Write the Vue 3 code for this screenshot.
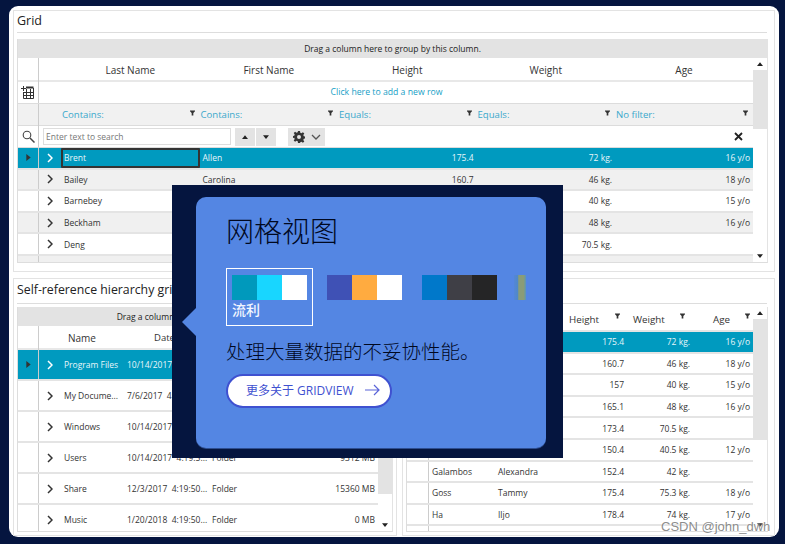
<template>
  <div class="page">
    <svg class="sprite" aria-hidden="true">
      <symbol id="chev" viewBox="0 0 6 10"><path d="M1 1l4 4-4 4" fill="none" stroke="currentColor" stroke-width="1.5" /></symbol>
      <symbol id="funnel" viewBox="0 0 6 6"><path d="M0 0h6v1L4 3v3H2V3L0 1z" fill="currentColor" /></symbol>
      <symbol id="tri-up" viewBox="0 0 8 5"><path d="M4 0l4 5H0z" fill="currentColor" /></symbol>
      <symbol id="tri-down" viewBox="0 0 8 5"><path d="M0 0h8L4 5z" fill="currentColor" /></symbol>
    </svg>

    <div class="window">
      <!-- Grid -->
      <section class="panel panel-top">
        <h2 class="panel-title">Grid</h2>
        <div class="grid">
          <div class="group-bar">Drag a column here to group by this column.</div>
          <div class="grid-body">
            <div class="grid-main">
              <div class="row row-head cols-main">
                <div class="ind"></div>
                <div></div>
                <div v-for="c in mainCols" :key="c" class="head-cell">{{ c }}</div>
              </div>
              <div class="row row-new">
                <div class="ind ind-new">
                  <svg width="13" height="13" viewBox="0 0 13 13" fill="none" stroke="#333" stroke-width="1">
                    <path d="M2.500 0v5M0 2.500h5" />
                    <path d="M5 1.500h7.500" stroke-width="2" />
                    <path d="M12.500 2v10.500h-10V6M2.500 6.500h10M2.500 9.500h10M5.500 3v9.500M9.500 3v9.500" />
                  </svg>
                </div>
                <div class="new-text">Click here to add a new row</div>
              </div>
              <div class="row row-filter cols-main">
                <div class="ind"></div>
                <div></div>
                <div v-for="(f, i) in filters" :key="i" class="filter-cell">
                  <span>{{ f }}</span>
                  <svg class="funnel"><use href="#funnel" /></svg>
                </div>
              </div>
              <div class="row row-search">
                <div class="ind ind-search">
                  <svg width="13" height="13" viewBox="0 0 13 13" fill="none" stroke="#444" stroke-width="1.100">
                    <circle cx="5" cy="5" r="3.800" />
                    <path d="M8 8l4.500 4.500" stroke-width="1.500" />
                  </svg>
                </div>
                <div class="search-bar">
                  <div class="search-input">Enter text to search</div>
                  <div class="nav-btns">
                    <button class="tool-btn"><svg class="tri"><use href="#tri-up" /></svg></button>
                    <button class="tool-btn"><svg class="tri"><use href="#tri-down" /></svg></button>
                  </div>
                  <button class="tool-btn gear-btn">
                    <svg width="12" height="12" viewBox="0 0 24 24" fill="#333">
                      <path fill-rule="evenodd" d="M10 0h4l.6 3.400 2.300 1 2.900-2 2.800 2.800-2 2.900 1 2.300 3.400.6v4l-3.400.6-1 2.300 2 2.900-2.800 2.800-2.900-2-2.300 1L14 24h-4l-.6-3.400-2.300-1-2.900 2-2.800-2.800 2-2.900-1-2.300L-1 14v-4l3.400-.6 1-2.300-2-2.900 2.800-2.800 2.900 2 2.300-1zM12 8a4 4 0 100 8 4 4 0 000-8z" />
                    </svg>
                    <svg width="10" height="6" viewBox="0 0 10 6" fill="none" stroke="#555" stroke-width="1.300"><path d="M1 1l4 4 4-4" /></svg>
                  </button>
                  <svg class="close-x" width="9" height="9" viewBox="0 0 9 9" stroke="#222" stroke-width="1.800"><path d="M1 1l7 7M8 1L1 8" /></svg>
                </div>
              </div>
              <div
                v-for="(p, i) in people"
                :key="p.last"
                :class="['row', 'row-data', 'cols-main', { selected: i === 0, alt: i % 2 === 1 }]"
              >
                <div class="ind">
                  <svg v-if="i === 0" class="row-arrow"><use href="#tri-down" /></svg>
                </div>
                <div class="chev-cell"><svg class="chev"><use href="#chev" /></svg></div>
                <div :class="['cell', { current: i === 0 }]">{{ p.last }}</div>
                <div class="cell">{{ p.first }}</div>
                <div class="cell num">{{ p.height }}</div>
                <div class="cell num">{{ p.weight }}</div>
                <div class="cell num">{{ p.age }}</div>
              </div>
              <div class="row row-data cols-main alt">
                <div class="ind"></div>
              </div>
            </div>
            <div class="scrollbar">
              <div class="sb-btn"><svg class="tri-small"><use href="#tri-up" /></svg></div>
              <div class="sb-thumb thumb-top"></div>
              <div class="sb-rest"></div>
              <div class="sb-btn"><svg class="tri-small"><use href="#tri-down" /></svg></div>
            </div>
          </div>
        </div>
      </section>

      <div class="panel-row">
        <!-- Hierarchy -->
        <section class="panel panel-left">
          <h2 class="panel-title">Self-reference hierarchy grid</h2>
          <div class="grid">
            <div class="group-bar">Drag a column here to group by this column.</div>
            <div class="grid-body">
              <div class="grid-main">
                <div class="row row-head cols-tree">
                  <div class="ind"></div>
                  <div></div>
                  <div class="head-cell head-name">Name</div>
                  <div class="head-cell head-date">Date</div>
                </div>
                <div
                  v-for="(f, i) in files"
                  :key="f.name"
                  :class="['row', 'row-tree', 'cols-tree', { selected: i === 0 }]"
                >
                  <div class="ind">
                    <svg v-if="i === 0" class="row-arrow"><use href="#tri-down" /></svg>
                  </div>
                  <div class="chev-cell"><svg class="chev"><use href="#chev" /></svg></div>
                  <div class="cell">{{ f.name }}</div>
                  <div class="cell">{{ f.date }}</div>
                  <div class="cell">Folder</div>
                  <div class="cell num">{{ f.size }}</div>
                </div>
              </div>
              <div class="scrollbar">
                <div class="sb-btn"><svg class="tri-small"><use href="#tri-up" /></svg></div>
                <div class="sb-thumb thumb-left"></div>
                <div class="sb-rest"></div>
                <div class="sb-btn"><svg class="tri-small"><use href="#tri-down" /></svg></div>
              </div>
            </div>
          </div>
        </section>

        <!-- Filter row -->
        <section class="panel panel-right">
          <h2 class="panel-title">&nbsp;</h2>
          <div class="grid">
            <div class="grid-body">
              <div class="grid-main">
                <div class="row row-head-r cols-right">
                  <div class="ind"></div>
                  <div></div>
                  <div></div>
                  <div class="head-f hf-height"><span>Height</span><svg class="funnel"><use href="#funnel" /></svg></div>
                  <div class="head-f hf-weight"><span>Weight</span><svg class="funnel"><use href="#funnel" /></svg></div>
                  <div class="head-f hf-age"><span>Age</span><svg class="funnel"><use href="#funnel" /></svg></div>
                </div>
                <div
                  v-for="(p, i) in peopleRight"
                  :key="i"
                  :class="['row', 'row-data', 'cols-right', { selected: i === 0 }]"
                >
                  <div class="ind"></div>
                  <div class="cell">{{ p.last }}</div>
                  <div class="cell">{{ p.first }}</div>
                  <div class="cell num">{{ p.height }}</div>
                  <div class="cell num">{{ p.weight }}</div>
                  <div class="cell num">{{ p.age }}</div>
                </div>
                <div class="row row-data cols-right"><div class="ind"></div></div>
              </div>
              <div class="scrollbar">
                <div class="sb-btn"><svg class="tri-small"><use href="#tri-up" /></svg></div>
                <div class="sb-thumb thumb-right"></div>
                <div class="sb-rest"></div>
                <div class="sb-btn"><svg class="tri-small"><use href="#tri-down" /></svg></div>
              </div>
            </div>
          </div>
        </section>
      </div>
    </div>

    <!-- Popup over the grids -->
    <div class="popup">
      <div class="card">
        <h1 class="card-title">网格视图</h1>
        <div class="themes">
          <div v-for="(t, i) in themes" :key="i" :class="['theme', { active: i === 0 }]">
            <div class="swatches">
              <span v-for="c in t.colors" :key="c" class="swatch" :style="{ background: c }"></span>
            </div>
            <div v-if="t.name" class="theme-name">{{ t.name }}</div>
          </div>
          <div class="theme-cut"></div>
        </div>
        <p class="card-text">处理大量数据的不妥协性能。</p>
        <a class="more-btn">
          <span>更多关于 GRIDVIEW</span>
          <svg width="15" height="12" viewBox="0 0 15 12" fill="none" stroke="#5a64d8" stroke-width="1.200">
            <path d="M0 6h14M9 1l5 5-5 5" />
          </svg>
        </a>
      </div>
    </div>

    <div class="watermark">CSDN @john_dwh</div>
  </div>
</template>

<script setup>
const mainCols = ['Last Name', 'First Name', 'Height', 'Weight', 'Age']
const filters = ['Contains:', 'Contains:', 'Equals:', 'Equals:', 'No filter:']

const people = [
  { last: 'Brent', first: 'Allen', height: '175.4', weight: '72 kg.', age: '16 y/o' },
  { last: 'Bailey', first: 'Carolina', height: '160.7', weight: '46 kg.', age: '18 y/o' },
  { last: 'Barnebey', first: '', height: '157', weight: '40 kg.', age: '15 y/o' },
  { last: 'Beckham', first: '', height: '165.1', weight: '48 kg.', age: '16 y/o' },
  { last: 'Deng', first: '', height: '173.4', weight: '70.5 kg.', age: '' },
]

const peopleRight = [
  ...people.map((p) => ({ ...p, last: '', first: '' })),
  { last: '', first: '', height: '150.4', weight: '40.5 kg.', age: '12 y/o' },
  { last: 'Galambos', first: 'Alexandra', height: '152.4', weight: '42 kg.', age: '' },
  { last: 'Goss', first: 'Tammy', height: '175.4', weight: '75.3 kg.', age: '18 y/o' },
  { last: 'Ha', first: 'Iljo', height: '178.4', weight: '74 kg.', age: '17 y/o' },
]

const files = [
  { name: 'Program Files', date: '10/14/2017  4:19:50...', size: '' },
  { name: 'My Docume...', date: '7/6/2017  4:19:50...', size: '' },
  { name: 'Windows', date: '10/14/2017  4:19:50...', size: '' },
  { name: 'Users', date: '10/14/2017  4:19:5...', size: '9312 MB' },
  { name: 'Share', date: '12/3/2017  4:19:50...', size: '15360 MB' },
  { name: 'Music', date: '1/20/2018  4:19:50...', size: '0 MB' },
]

const themes = [
  { name: '流利', colors: ['#0099bc', '#18d6ff', '#ffffff'] },
  { name: '', colors: ['#3f51b5', '#ffab40', '#ffffff'] },
  { name: '', colors: ['#0078ca', '#3f3f46', '#252526'] },
]
</script>

<style scoped>
.page {
  position: relative;
  width: 785px;
  height: 544px;
  overflow: hidden;
  box-sizing: border-box;
  padding: 6px 6px 7px 9px;
  background: #05153f;
  font-family: "Open Sans", "Noto Sans", sans-serif;
  color: #333;
}

.sprite {
  position: absolute;
  width: 0;
  height: 0;
}

.window {
  display: flex;
  flex-direction: column;
  gap: 6px;
  height: 531px;
  box-sizing: border-box;
  padding: 4px 4px 1px;
  background: #fff;
  border-radius: 9px;
}

.panel {
  box-sizing: border-box;
  padding: 0 6px 0 3px;
  border: 1px solid #e3e3e3;
  background: #fff;
}

.panel-top {
  height: 262px;
}

.panel-row {
  display: flex;
  gap: 5px;
  height: 258px;
}

.panel-left {
  width: 384px;
  padding-right: 3px;
}

.panel-right {
  width: 373px;
}

.panel-title {
  height: 21px;
  margin: 0 1px 6px 0;
  border-bottom: 1px solid #ddd;
  font-size: 12.500px;
  font-weight: 400;
  line-height: 20px;
  color: #222;
}

.panel-row .panel-title {
  height: 24px;
  margin-bottom: 3px;
  font-size: 12.300px;
  line-height: 22px;
}

.grid {
  box-sizing: border-box;
  height: 224px;
  overflow: hidden;
  border-right: 1px solid #e3e3e3;
  border-bottom: 1px solid #ddd;
  border-left: 1px solid #ddd;
}

.panel-row .grid {
  height: 225px;
}

.group-bar {
  height: 19px;
  background: #e3e3e3;
  font-size: 8.500px;
  line-height: 19px;
  text-align: center;
  color: #222;
}

.grid-body {
  display: flex;
  height: calc(100% - 19px);
}

.panel-right .grid-body {
  height: 100%;
}

.grid-main {
  flex: 1;
  min-width: 0;
  overflow: hidden;
}

.row {
  display: grid;
  box-sizing: border-box;
  border-bottom: 1px solid #dcdcdc;
  align-items: stretch;
}

.cols-main {
  grid-template-columns: 21px 22px repeat(4, 138.500px) 1fr;
}

.cols-tree {
  grid-template-columns: 21px 22px 63px 85px 90px 1fr;
}

.cols-right {
  grid-template-columns: 22px 66px 66px 66px 66px 1fr;
}

.ind {
  display: flex;
  align-items: center;
  justify-content: center;
  border-right: 1px solid #ccc;
}

.ind-new {
  padding-right: 2px;
}

.row-head {
  height: 24px;
  border-bottom-width: 2px;
  border-bottom-color: #e8e8e8;
}

.head-cell {
  font-size: 10px;
  line-height: 24px;
  text-align: center;
  color: #333;
}

.head-name {
  padding-left: 7px;
  text-align: left;
}

.head-date {
  padding-left: 30px;
  font-size: 9.500px;
  text-align: left;
}

.row-new {
  grid-template-columns: 21px 1fr;
  height: 22px;
}

.new-text {
  padding-right: 19px;
  font-size: 8.700px;
  font-weight: 500;
  line-height: 21px;
  text-align: center;
  color: #16a0c6;
}

.row-filter {
  height: 22px;
  background: #f1f1f1;
}

.filter-cell {
  display: flex;
  align-items: flex-start;
  justify-content: space-between;
  padding: 0 5px 0 1px;
  font-size: 9.600px;
  line-height: 22px;
  color: #3aa8cc;
}

.funnel {
  flex: none;
  width: 5px;
  height: 6px;
  margin-top: 6px;
  color: #333;
}

.row-search {
  grid-template-columns: 21px 1fr;
  height: 22px;
}

.search-bar {
  display: flex;
  align-items: center;
  padding-left: 4px;
}

.search-input {
  box-sizing: border-box;
  width: 188px;
  height: 17px;
  padding-left: 2px;
  border: 1px solid #ddd;
  font-size: 8.500px;
  line-height: 15px;
  color: #777;
}

.nav-btns {
  display: flex;
  gap: 1px;
  margin-left: 4px;
}

.tool-btn {
  display: flex;
  align-items: center;
  justify-content: center;
  width: 20px;
  height: 18px;
  padding: 0;
  border: 0;
  background: #e3e3e3;
}

.tri {
  width: 6px;
  height: 4px;
  color: #222;
}

.gear-btn {
  gap: 6px;
  width: 37px;
  margin-left: 12px;
}

.close-x {
  margin-left: auto;
  margin-right: 10px;
}

.row-data {
  height: 21.600px;
  font-size: 8.500px;
  border-bottom-width: 2px;
  border-bottom-color: #e4e4e4;
}

.row-tree {
  height: 31px;
  font-size: 8.500px;
  border-bottom-width: 2px;
  border-bottom-color: #e4e4e4;
}

.alt {
  background: #f0f0f0;
}

.selected {
  background: #009abf;
  color: #e8f6fa;
}

.cell {
  display: flex;
  align-items: center;
  box-sizing: border-box;
  min-width: 0;
  padding: 0 3px;
  white-space: pre;
  overflow: hidden;
}

.num {
  justify-content: flex-end;
}

.cell.current {
  padding-left: 1px;
  border: 2px solid #333;
  border-radius: 1px;
}

.chev-cell {
  display: flex;
  align-items: center;
  justify-content: center;
}

.chev {
  width: 6px;
  height: 10px;
  color: #333;
}

.selected .chev {
  color: #fff;
}

.row-arrow {
  width: 7px;
  height: 5px;
  color: #333;
  transform: rotate(-90deg);
}

.scrollbar {
  display: flex;
  flex: none;
  flex-direction: column;
  width: 14px;
}

.sb-btn {
  display: flex;
  flex: none;
  align-items: center;
  justify-content: center;
  height: 12px;
}

.tri-small {
  width: 6px;
  height: 4px;
  color: #222;
}

.sb-thumb {
  flex: none;
  background: #e3e3e3;
}

.thumb-top {
  height: 59px;
}

.thumb-left {
  height: 156px;
}

.thumb-right {
  height: 121px;
}

.sb-rest {
  flex: 1;
}

.row-head-r {
  height: 25px;
  border-bottom-width: 2px;
  border-bottom-color: #e4e4e4;
}

.head-f {
  display: flex;
  align-items: flex-start;
  justify-content: space-between;
  font-size: 9.800px;
  line-height: 26px;
}

.hf-height {
  padding: 0 7px 0 8px;
}

.hf-weight {
  padding: 0 8px 0 6px;
}

.hf-age {
  padding: 0 3px 0 20px;
}

.popup {
  position: absolute;
  top: 185px;
  left: 172px;
  box-sizing: border-box;
  width: 391px;
  height: 273px;
  padding: 12px 17px 10px 24px;
  background: #05153f;
}

.card {
  position: relative;
  box-sizing: border-box;
  height: 251px;
  padding: 13px 20px 0 30px;
  background: #5486e3;
  border-radius: 10px;
  box-shadow: 0 1px 0 #2d4d8f;
  color: #00081f;
}

.card::before {
  content: "";
  position: absolute;
  top: 111px;
  left: -14px;
  border-top: 14px solid transparent;
  border-right: 14px solid #5486e3;
  border-bottom: 14px solid transparent;
}

.card-title {
  margin: 0;
  font-family: "Noto Sans CJK SC", sans-serif;
  font-size: 28px;
  font-weight: 300;
  line-height: 40px;
}

.themes {
  display: flex;
  gap: 8px;
  width: 300px;
  height: 58px;
  margin-top: 18px;
  overflow: hidden;
}

.theme {
  box-sizing: border-box;
  flex: none;
  width: 87px;
  height: 58px;
  padding: 6px 5px 0;
  border: 1px solid transparent;
}

.active {
  border-color: #fff;
}

.swatches {
  display: flex;
}

.swatch {
  width: 25px;
  height: 25px;
}

.theme-name {
  margin-top: -1px;
  font-family: "Noto Sans CJK SC", sans-serif;
  font-size: 14px;
  font-weight: 500;
  line-height: 20px;
  color: #f2f6ff;
}

.theme-cut {
  flex: none;
  width: 12px;
  height: 25px;
  margin: 7px 0 0 3px;
  background: linear-gradient(90deg, #5486d8 0, #4f88c9 30%, #8a9c78 40%, #8a9c78 80%, #5a96b8 100%);
}

.card-text {
  margin: 11px 0 0;
  font-family: "Noto Sans CJK SC", sans-serif;
  font-size: 19.500px;
  font-weight: 300;
  line-height: 28px;
}

.more-btn {
  display: flex;
  align-items: center;
  justify-content: space-between;
  box-sizing: border-box;
  width: 166px;
  height: 34px;
  margin-top: 9px;
  padding: 0 10px 2px 18px;
  background: #fff;
  border: 2px solid #3f51d0;
  border-radius: 17px;
  font-family: "Open Sans", "Noto Sans CJK SC", sans-serif;
  font-size: 12px;
  color: #3f51d0;
}

.watermark {
  position: absolute;
  top: 519px;
  left: 661px;
  font-family: "Liberation Sans", sans-serif;
  font-size: 13px;
  line-height: 16px;
  color: rgba(110, 110, 110, 0.8);
  text-shadow: 0 0 2px #fff;
}
</style>

<style>
html,
body {
  margin: 0;
  background: #05153f;
}
</style>
